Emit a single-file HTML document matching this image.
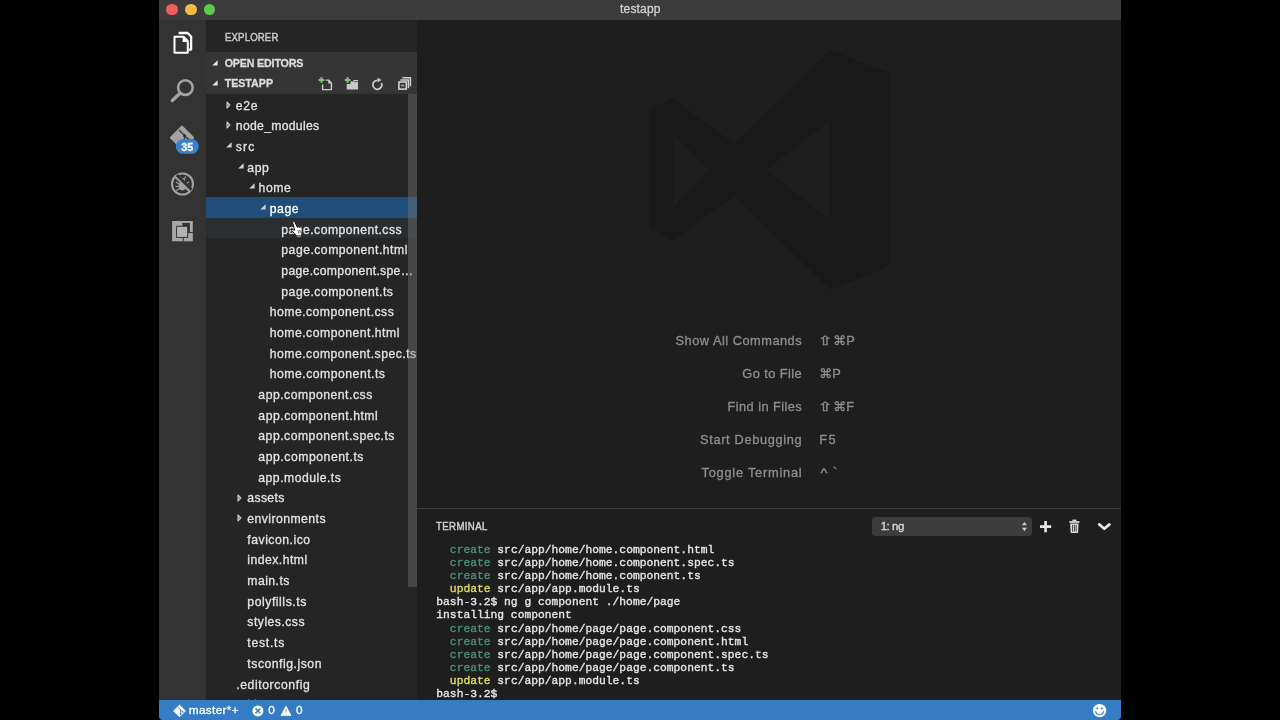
<!DOCTYPE html><html><head><meta charset="utf-8"><title>testapp</title><style>
*{box-sizing:border-box;margin:0;padding:0}
html,body{width:1280px;height:720px;overflow:hidden;background:#000}
body{position:relative;font-family:"Liberation Sans",sans-serif;color:#ccc}
.a{position:absolute}
.x{position:absolute;white-space:pre;line-height:16px;height:16px;-webkit-text-stroke:0.3px}
#win{position:absolute;left:158.7px;top:0;width:962.6px;height:720px;background:#1e1e1e;border-radius:0 0 4px 4px}
</style></head><body><div id="root" style="position:absolute;left:0;top:0;width:1280px;height:720px;will-change:transform">
<div id="win"></div>
<div class="a" style="left:158.70px;top:0.00px;width:962.60px;height:20.00px;background:#3c3c3c;"></div>
<div class="x" style="left:620.05px;top:1.00px;font-size:12.00px;color:#cfcfcf;letter-spacing:0.171px;">testapp</div>
<div class="a" style="left:166.2px;top:3.5px;width:11.7px;height:11.7px;border-radius:50%;background:#ee5f5b"></div>
<div class="a" style="left:185.1px;top:3.5px;width:11.7px;height:11.7px;border-radius:50%;background:#f5bc46"></div>
<div class="a" style="left:203.8px;top:3.5px;width:11.7px;height:11.7px;border-radius:50%;background:#5acd46"></div>
<div class="a" style="left:158.70px;top:20.00px;width:47.30px;height:680.00px;background:#333333;"></div>
<svg class="a" style="left:159px;top:20px" width="47" height="240" viewBox="159 20 47 240">
<!-- files -->
<path d="M178.6 33 L187.6 33 L191.1 36.5 L191.1 49.6 L189 49.6" fill="none" stroke="#ffffff" stroke-width="2.3" stroke-linejoin="round"/>
<path d="M174.5 36.7 L183.5 36.7 L187.8 41 L187.8 52.7 L174.5 52.7 Z" fill="none" stroke="#ffffff" stroke-width="2" stroke-linejoin="round"/>
<path d="M182.6 36.7 L182.6 42 L187.8 42 Z" fill="#ffffff"/>
<!-- search -->
<circle cx="185.4" cy="87.6" r="7.3" fill="none" stroke="#a2a2a2" stroke-width="2.6"/>
<path d="M179.8 93.4 L172.3 100.5" stroke="#a2a2a2" stroke-width="3.4" stroke-linecap="round"/>
<!-- git -->
<path d="M182 126.2 L193.4 137.6 L182 149 L170.6 137.6 Z" fill="#a2a2a2" stroke="#a2a2a2" stroke-width="1.5" stroke-linejoin="round"/>
<path d="M179 130 L184.5 135.5 L184.5 144 M184.5 135.5 L189 140" stroke="#333" stroke-width="1.3" fill="none"/>
<circle cx="184.5" cy="135.5" r="1.5" fill="#333"/><circle cx="184.5" cy="143.5" r="1.5" fill="#333"/><circle cx="188.6" cy="139.7" r="1.5" fill="#333"/>
<rect x="175.8" y="139" width="23" height="14.8" rx="7.4" fill="#3a82cf"/>
<!-- debug -->
<circle cx="182.5" cy="184" r="10.5" fill="none" stroke="#a2a2a2" stroke-width="2.1"/>
<ellipse cx="182.3" cy="186" rx="3.6" ry="4.4" fill="#a2a2a2"/>
<circle cx="183" cy="180" r="2.1" fill="#a2a2a2"/>
<path d="M176 182 L179 184.4 M175.5 186.5 L179 186.5 M176.4 190.6 L179.5 188.6 M189 181.6 L186 184 M189.5 186 L186 186 M188.6 190.4 L185.5 188.4 M180 176.5 L181.6 178.6 M186 176.5 L184.4 178.6" stroke="#a2a2a2" stroke-width="1.2"/>
<path d="M176.5 175.4 L191.2 190.4" stroke="#333" stroke-width="4"/>
<path d="M175 176.6 L190 191.5" stroke="#a2a2a2" stroke-width="2"/>
<!-- extensions -->
<rect x="172.1" y="221" width="20.7" height="20.3" fill="#a6a6a6"/>
<rect x="182.4" y="222.9" width="7.5" height="9.4" fill="#333"/>
<rect x="182.7" y="237" width="1" height="4.4" fill="#333"/>
<rect x="187.5" y="232" width="5.4" height="1" fill="#333"/>
<rect x="176.6" y="226.3" width="11.1" height="11.1" fill="#b2b2b2" stroke="#333" stroke-width="1"/>
</svg>
<div class="x" style="left:175.8px;top:138.5px;width:23px;text-align:center;font-size:10.8px;font-weight:bold;color:#fff">35</div>

<div class="a" style="left:206.00px;top:20.00px;width:211.00px;height:680.00px;background:#252526;"></div>
<div class="x" style="left:224.65px;top:29.00px;font-size:10.70px;color:#c6c6c6;letter-spacing:0.154px;transform:scaleX(0.900);transform-origin:0 0;-webkit-text-stroke:0.5px;">EXPLORER</div>
<div class="a" style="left:206.00px;top:52.00px;width:211.00px;height:42.00px;background:#353535;"></div>
<div class="x" style="left:224.65px;top:55.00px;font-size:10.70px;color:#dcdcdc;font-weight:bold;letter-spacing:-0.162px;">OPEN EDITORS</div>
<div class="x" style="left:224.65px;top:75.00px;font-size:10.70px;color:#dcdcdc;font-weight:bold;letter-spacing:-0.017px;">TESTAPP</div>
<svg class="a" style="left:212.1px;top:59.8px" width="6" height="6" viewBox="0 0 6 6"><path d="M5.6 0.2 L5.6 5.6 L0.2 5.6 Z" fill="#e4e4e4"/></svg>
<svg class="a" style="left:212.1px;top:80.4px" width="6" height="6" viewBox="0 0 6 6"><path d="M5.6 0.2 L5.6 5.6 L0.2 5.6 Z" fill="#e4e4e4"/></svg>
<svg class="a" style="left:312px;top:74px" width="104" height="20" viewBox="312 74 104 20">
<!-- new file -->
<path d="M325.6 80.1 L328.6 80.1 L331.4 83 L331.4 89.6 L322.6 89.6 L322.6 84.6" fill="none" stroke="#c8c8c8" stroke-width="1.45" stroke-linejoin="round"/>
<path d="M328.2 80.1 L328.2 83.4 L331.4 83.4 Z" fill="#c8c8c8"/>
<path d="M321.5 77.2 L321.5 82.8 M318.7 80 L324.3 80" stroke="#84c876" stroke-width="2.1"/>
<!-- new folder -->
<path d="M346.7 84 L350.4 84 L350.4 81.6 L353.3 81.6 L353.3 80 L358 80 L358 89.5 L346.7 89.5 Z" fill="#c8c8c8"/>
<path d="M353.6 81.6 L358 81.6" stroke="#383838" stroke-width="0.7"/>
<path d="M347.6 77.2 L347.6 82.8 M344.8 80 L350.4 80" stroke="#84c876" stroke-width="2.1"/>
<!-- refresh -->
<path d="M381.5 83 A4.5 4.5 0 1 1 377.6 80.3" fill="none" stroke="#c8c8c8" stroke-width="1.8"/>
<path d="M377.6 77.6 L381.4 80 L377.6 82.6 Z" fill="#c8c8c8"/>
<!-- collapse all -->
<path d="M402.4 77.8 L410.4 77.8 L410.4 86.2" fill="none" stroke="#d0d0d0" stroke-width="1.5"/>
<path d="M400.4 79.9 L408.4 79.9 L408.4 88.2" fill="none" stroke="#d0d0d0" stroke-width="1.5"/>
<rect x="398.9" y="82" width="7.4" height="7.1" fill="#353535" stroke="#d0d0d0" stroke-width="1.6"/>
<rect x="400.9" y="84.7" width="3.4" height="1.7" fill="#9a9a9a"/>
</svg>

<svg class="a" style="left:225.5px;top:100.7px" width="6" height="9" viewBox="0 0 6 9"><path d="M1 1 L3.9 4 L1 7 Z" fill="#777" stroke="#c8c8c8" stroke-width="1.1" stroke-linejoin="round"/></svg>
<div class="x" style="left:235.85px;top:98.00px;font-size:12.20px;color:#e2e2e2;letter-spacing:0.678px;">e2e</div>
<svg class="a" style="left:225.5px;top:121.4px" width="6" height="9" viewBox="0 0 6 9"><path d="M1 1 L3.9 4 L1 7 Z" fill="#777" stroke="#c8c8c8" stroke-width="1.1" stroke-linejoin="round"/></svg>
<div class="x" style="left:235.85px;top:118.00px;font-size:12.20px;color:#e2e2e2;letter-spacing:0.303px;">node_modules</div>
<svg class="a" style="left:226.0px;top:142.0px" width="6" height="6" viewBox="0 0 6 6"><path d="M5.6 0.2 L5.6 5.6 L0.2 5.6 Z" fill="#d0d0d0"/></svg>
<div class="x" style="left:235.85px;top:139.00px;font-size:12.20px;color:#e2e2e2;letter-spacing:1.075px;">src</div>
<svg class="a" style="left:237.5px;top:162.6px" width="6" height="6" viewBox="0 0 6 6"><path d="M5.6 0.2 L5.6 5.6 L0.2 5.6 Z" fill="#d0d0d0"/></svg>
<div class="x" style="left:247.35px;top:160.00px;font-size:12.20px;color:#e2e2e2;letter-spacing:0.528px;">app</div>
<svg class="a" style="left:248.7px;top:183.3px" width="6" height="6" viewBox="0 0 6 6"><path d="M5.6 0.2 L5.6 5.6 L0.2 5.6 Z" fill="#d0d0d0"/></svg>
<div class="x" style="left:258.55px;top:180.00px;font-size:12.20px;color:#e2e2e2;letter-spacing:0.567px;">home</div>
<div class="a" style="left:206.00px;top:197.06px;width:211.00px;height:20.68px;background:#204d79;"></div>
<svg class="a" style="left:259.9px;top:204.0px" width="6" height="6" viewBox="0 0 6 6"><path d="M5.6 0.2 L5.6 5.6 L0.2 5.6 Z" fill="#d0d0d0"/></svg>
<div class="x" style="left:269.75px;top:201.00px;font-size:12.20px;color:#ffffff;letter-spacing:0.558px;">page</div>
<div class="a" style="left:206.00px;top:217.74px;width:211.00px;height:20.68px;background:#2b2e30;"></div>
<div class="x" style="left:281.35px;top:222.00px;font-size:12.20px;color:#e2e2e2;letter-spacing:0.455px;">page.component.css</div>
<div class="x" style="left:281.35px;top:242.00px;font-size:12.20px;color:#e2e2e2;letter-spacing:0.488px;">page.component.html</div>
<div class="x" style="left:281.35px;top:263.00px;font-size:12.20px;color:#e2e2e2;letter-spacing:0.304px;">page.component.spe…</div>
<div class="x" style="left:281.35px;top:284.00px;font-size:12.20px;color:#e2e2e2;letter-spacing:0.496px;">page.component.ts</div>
<div class="x" style="left:269.75px;top:304.00px;font-size:12.20px;color:#e2e2e2;letter-spacing:0.480px;">home.component.css</div>
<div class="x" style="left:269.75px;top:325.00px;font-size:12.20px;color:#e2e2e2;letter-spacing:0.500px;">home.component.html</div>
<div class="x" style="left:269.75px;top:346.00px;font-size:12.20px;color:#e2e2e2;letter-spacing:0.487px;">home.component.spec.ts</div>
<div class="x" style="left:269.75px;top:366.00px;font-size:12.20px;color:#e2e2e2;letter-spacing:0.510px;">home.component.ts</div>
<div class="x" style="left:258.35px;top:387.00px;font-size:12.20px;color:#e2e2e2;letter-spacing:0.512px;">app.component.css</div>
<div class="x" style="left:258.35px;top:408.00px;font-size:12.20px;color:#e2e2e2;letter-spacing:0.527px;">app.component.html</div>
<div class="x" style="left:258.35px;top:428.00px;font-size:12.20px;color:#e2e2e2;letter-spacing:0.503px;">app.component.spec.ts</div>
<div class="x" style="left:258.35px;top:449.00px;font-size:12.20px;color:#e2e2e2;letter-spacing:0.547px;">app.component.ts</div>
<div class="x" style="left:258.35px;top:470.00px;font-size:12.20px;color:#e2e2e2;letter-spacing:0.486px;">app.module.ts</div>
<svg class="a" style="left:237.0px;top:493.6px" width="6" height="9" viewBox="0 0 6 9"><path d="M1 1 L3.9 4 L1 7 Z" fill="#777" stroke="#c8c8c8" stroke-width="1.1" stroke-linejoin="round"/></svg>
<div class="x" style="left:247.35px;top:490.00px;font-size:12.20px;color:#e2e2e2;letter-spacing:0.353px;">assets</div>
<svg class="a" style="left:237.0px;top:514.3px" width="6" height="9" viewBox="0 0 6 9"><path d="M1 1 L3.9 4 L1 7 Z" fill="#777" stroke="#c8c8c8" stroke-width="1.1" stroke-linejoin="round"/></svg>
<div class="x" style="left:247.35px;top:511.00px;font-size:12.20px;color:#e2e2e2;letter-spacing:0.457px;">environments</div>
<div class="x" style="left:247.35px;top:532.00px;font-size:12.20px;color:#e2e2e2;letter-spacing:0.511px;">favicon.ico</div>
<div class="x" style="left:247.35px;top:552.00px;font-size:12.20px;color:#e2e2e2;letter-spacing:0.473px;">index.html</div>
<div class="x" style="left:247.35px;top:573.00px;font-size:12.20px;color:#e2e2e2;letter-spacing:0.451px;">main.ts</div>
<div class="x" style="left:247.35px;top:594.00px;font-size:12.20px;color:#e2e2e2;letter-spacing:0.552px;">polyfills.ts</div>
<div class="x" style="left:247.35px;top:614.00px;font-size:12.20px;color:#e2e2e2;letter-spacing:0.486px;">styles.css</div>
<div class="x" style="left:247.35px;top:635.00px;font-size:12.20px;color:#e2e2e2;letter-spacing:0.731px;">test.ts</div>
<div class="x" style="left:247.35px;top:656.00px;font-size:12.20px;color:#e2e2e2;letter-spacing:0.529px;">tsconfig.json</div>
<div class="x" style="left:236.15px;top:677.00px;font-size:12.20px;color:#e2e2e2;letter-spacing:0.599px;">.editorconfig</div>
<div class="x" style="left:236.15px;top:697.00px;font-size:12.20px;color:#e2e2e2;letter-spacing:0.451px;">.gitignore</div>
<div class="a" style="left:408.00px;top:94.00px;width:9.00px;height:492.60px;background:rgba(121,121,121,0.4);"></div>
<svg class="a" style="left:640px;top:40px" width="260" height="260" viewBox="640 40 260 260"><path fill="#191919" fill-rule="evenodd" d="M650 108.8 L672.9 98.3 L734.2 143.8 L830.4 50 L889.6 73.3 L889.6 265.8 L830.4 290 L734.2 195.8 L672.9 240.8 L650 228.3 Z M672.9 133.3 L709.2 170 L672.9 206.3 Z M829.2 120.8 L766.7 170 L829.2 219.2 Z"/></svg>

<div class="x" style="left:675.55px;top:332.86px;font-size:12.80px;color:#8e8e8e;letter-spacing:0.501px;">Show All Commands</div>
<div class="x" style="left:810.30px;top:332.86px;font-size:12.80px;color:#8e8e8e;font-family:'Liberation Sans','DejaVu Sans',sans-serif;width:30px;text-align:center;transform:scaleX(1.45);">⇧</div>
<div class="x" style="left:824.40px;top:332.86px;font-size:12.80px;color:#8e8e8e;font-family:'Liberation Sans','DejaVu Sans',sans-serif;width:30px;text-align:center;">⌘</div>
<div class="x" style="left:835.65px;top:332.86px;font-size:12.80px;color:#8e8e8e;font-family:'Liberation Sans','DejaVu Sans',sans-serif;width:30px;text-align:center;">P</div>
<div class="x" style="left:742.25px;top:365.86px;font-size:12.80px;color:#8e8e8e;letter-spacing:0.435px;">Go to File</div>
<div class="x" style="left:810.30px;top:365.86px;font-size:12.80px;color:#8e8e8e;font-family:'Liberation Sans','DejaVu Sans',sans-serif;width:30px;text-align:center;">⌘</div>
<div class="x" style="left:821.45px;top:365.86px;font-size:12.80px;color:#8e8e8e;font-family:'Liberation Sans','DejaVu Sans',sans-serif;width:30px;text-align:center;">P</div>
<div class="x" style="left:727.55px;top:398.86px;font-size:12.80px;color:#8e8e8e;letter-spacing:0.426px;">Find in Files</div>
<div class="x" style="left:810.30px;top:398.86px;font-size:12.80px;color:#8e8e8e;font-family:'Liberation Sans','DejaVu Sans',sans-serif;width:30px;text-align:center;transform:scaleX(1.45);">⇧</div>
<div class="x" style="left:824.40px;top:398.86px;font-size:12.80px;color:#8e8e8e;font-family:'Liberation Sans','DejaVu Sans',sans-serif;width:30px;text-align:center;">⌘</div>
<div class="x" style="left:835.25px;top:398.86px;font-size:12.80px;color:#8e8e8e;font-family:'Liberation Sans','DejaVu Sans',sans-serif;width:30px;text-align:center;">F</div>
<div class="x" style="left:700.05px;top:431.86px;font-size:12.80px;color:#8e8e8e;letter-spacing:0.651px;">Start Debugging</div>
<div class="x" style="left:808.05px;top:431.86px;font-size:12.80px;color:#8e8e8e;font-family:'Liberation Sans','DejaVu Sans',sans-serif;width:30px;text-align:center;">F</div>
<div class="x" style="left:817.00px;top:431.86px;font-size:12.80px;color:#8e8e8e;font-family:'Liberation Sans','DejaVu Sans',sans-serif;width:30px;text-align:center;">5</div>
<div class="x" style="left:701.55px;top:464.86px;font-size:12.80px;color:#8e8e8e;letter-spacing:0.765px;">Toggle Terminal</div>
<div class="x" style="left:809.00px;top:464.86px;font-size:12.80px;color:#8e8e8e;font-family:'Liberation Sans','DejaVu Sans',sans-serif;width:30px;text-align:center;transform:scaleX(1.15);">^</div>
<div class="x" style="left:820.05px;top:464.86px;font-size:12.80px;color:#8e8e8e;font-family:'Liberation Sans','DejaVu Sans',sans-serif;width:30px;text-align:center;">`</div>
<div class="a" style="left:417.00px;top:508.00px;width:704.30px;height:1.00px;background:#3c3c3c;"></div>
<div class="x" style="left:436.35px;top:518.00px;font-size:10.70px;color:#cdcdcd;letter-spacing:0.433px;transform:scaleX(0.900);transform-origin:0 0;-webkit-text-stroke:0.5px;">TERMINAL</div>
<div class="a" style="left:872.00px;top:516.80px;width:159.80px;height:19.20px;background:#3c3c3c;border-radius:3.5px"></div>
<div class="x" style="left:880.65px;top:518.00px;font-size:11.40px;color:#dedede;letter-spacing:-0.436px;">1: ng</div>
<svg class="a" style="left:1018px;top:516px" width="100" height="22" viewBox="1018 516 100 22">
<path d="M1021.9 525.2 L1024.4 521.8 L1026.9 525.2 Z M1021.9 527.8 L1024.4 531.2 L1026.9 527.8 Z" fill="#c8c8c8"/>
<path d="M1045.6 521 L1045.6 532.2 M1040 526.6 L1051.2 526.6" stroke="#e8e8e8" stroke-width="2.6"/>
<!-- trash -->
<rect x="1069.4" y="521.1" width="10" height="1.7" fill="#dcdcdc"/>
<rect x="1072.4" y="519.6" width="4" height="1.8" fill="#dcdcdc"/>
<path d="M1070.2 523.4 L1078.6 523.4 L1078.1 533 L1070.7 533 Z" fill="#dcdcdc"/>
<path d="M1072.6 524.8 L1072.6 531.6 M1074.4 524.8 L1074.4 531.6 M1076.2 524.8 L1076.2 531.6" stroke="#1e1e1e" stroke-width="0.8"/>
<!-- chevron -->
<path d="M1099.2 524.4 L1104.3 528.7 L1109.4 524.4" fill="none" stroke="#e8e8e8" stroke-width="2.7" stroke-linejoin="round" stroke-linecap="round"/>
</svg>

<div class="a" style="left:436.3px;top:543.55px;font-family:'Liberation Mono',monospace;font-size:11.30px;line-height:13.17px;color:#e4e4e4;white-space:pre;-webkit-text-stroke:0.35px">  <span style="color:#4a9073">create</span> src/app/home/home.component.html
  <span style="color:#4a9073">create</span> src/app/home/home.component.spec.ts
  <span style="color:#4a9073">create</span> src/app/home/home.component.ts
  <span style="color:#dfdf62">update</span> src/app/app.module.ts
bash-3.2$ ng g component ./home/page
installing component
  <span style="color:#4a9073">create</span> src/app/home/page/page.component.css
  <span style="color:#4a9073">create</span> src/app/home/page/page.component.html
  <span style="color:#4a9073">create</span> src/app/home/page/page.component.spec.ts
  <span style="color:#4a9073">create</span> src/app/home/page/page.component.ts
  <span style="color:#dfdf62">update</span> src/app/app.module.ts
bash-3.2$ </div>
<div class="a" style="left:158.70px;top:699.70px;width:962.60px;height:20.30px;background:#357cc4;border-radius:0 0 4px 4px"></div>
<svg class="a" style="left:170px;top:702px" width="135" height="18" viewBox="170 702 135 18">
<path d="M179.5 705 L185.4 710.9 L179.5 716.8 L173.6 710.9 Z" fill="#fff" stroke="#fff" stroke-width="0.8" stroke-linejoin="round"/>
<path d="M178 707.2 L180.6 709.8 L180.6 714.4 M180.6 709.8 L182.8 712" stroke="#357cc4" stroke-width="0.9" fill="none"/>
<circle cx="180.6" cy="714" r="0.9" fill="#357cc4"/><circle cx="182.6" cy="711.8" r="0.9" fill="#357cc4"/>
<circle cx="257.9" cy="710.9" r="5.5" fill="#fff"/>
<path d="M255.5 708.5 L260.3 713.3 M260.3 708.5 L255.5 713.3" stroke="#357cc4" stroke-width="1.6"/>
<path d="M286 706.2 L291 715.4 L281 715.4 Z" fill="#fff" stroke="#fff" stroke-width="0.8" stroke-linejoin="round"/>
<path d="M286 709 L286 712.6" stroke="#d88" stroke-width="1.1"/><circle cx="286" cy="714" r="0.6" fill="#d88"/>
</svg>
<svg class="a" style="left:1092px;top:703px" width="16" height="16" viewBox="1092 703 16 16">
<circle cx="1099.6" cy="710.6" r="6.7" fill="#fff"/>
<circle cx="1097.3" cy="708.4" r="1" fill="#357cc4"/><circle cx="1101.9" cy="708.4" r="1" fill="#357cc4"/>
<path d="M1095.6 711.6 A4.2 4.2 0 0 0 1103.6 711.6" fill="none" stroke="#357cc4" stroke-width="1.1" stroke-linecap="round"/>
</svg>

<div class="x" style="left:188.80px;top:701.91px;font-size:11.80px;color:#ffffff;letter-spacing:0.322px;">master*+</div>
<div class="x" style="left:268.15px;top:701.91px;font-size:11.80px;color:#ffffff;">0</div>
<div class="x" style="left:295.95px;top:701.91px;font-size:11.80px;color:#ffffff;">0</div>
<svg class="a" style="left:288px;top:218px" width="20" height="22" viewBox="288 218 20 22">
<path d="M292.6 222 Q293.6 220.6 294.8 222 L297.4 227.4 L298.6 226.8 L299.6 227.4 L300.6 227 L301.4 227.8 L302.2 228 L302.4 231.6 L301.4 235.8 L296.6 236 L291.8 230.6 Q291.2 229.2 292.8 229.4 L294.6 230.4 Z" fill="#fff" stroke="#1a1a1a" stroke-width="1" stroke-linejoin="round"/>
<path d="M298 230 L298.8 233.4 M299.6 230 L300.2 233.4 M301 230 L301.4 233.2" stroke="#222" stroke-width="0.6"/>
</svg>

</div></body></html>
